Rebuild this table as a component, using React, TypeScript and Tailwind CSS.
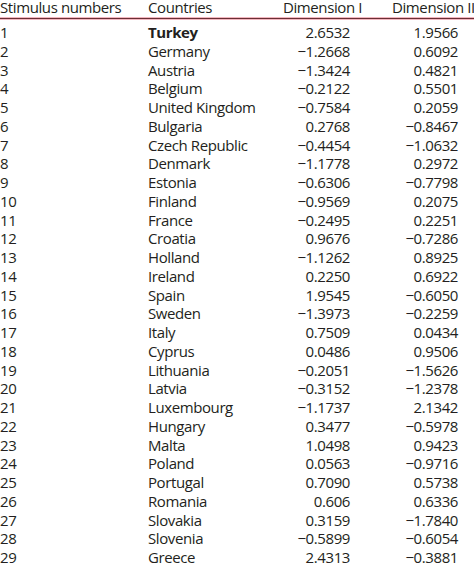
const rows: [string, string, string][] = [
  ["Turkey", "2.6532", "1.9566"],
  ["Germany", "\u22121.2668", "0.6092"],
  ["Austria", "\u22121.3424", "0.4821"],
  ["Belgium", "\u22120.2122", "0.5501"],
  ["United Kingdom", "\u22120.7584", "0.2059"],
  ["Bulgaria", "0.2768", "\u22120.8467"],
  ["Czech Republic", "\u22120.4454", "\u22121.0632"],
  ["Denmark", "\u22121.1778", "0.2972"],
  ["Estonia", "\u22120.6306", "\u22120.7798"],
  ["Finland", "\u22120.9569", "0.2075"],
  ["France", "\u22120.2495", "0.2251"],
  ["Croatia", "0.9676", "\u22120.7286"],
  ["Holland", "\u22121.1262", "0.8925"],
  ["Ireland", "0.2250", "0.6922"],
  ["Spain", "1.9545", "\u22120.6050"],
  ["Sweden", "\u22121.3973", "\u22120.2259"],
  ["Italy", "0.7509", "0.0434"],
  ["Cyprus", "0.0486", "0.9506"],
  ["Lithuania", "\u22120.2051", "\u22121.5626"],
  ["Latvia", "\u22120.3152", "\u22121.2378"],
  ["Luxembourg", "\u22121.1737", "2.1342"],
  ["Hungary", "0.3477", "\u22120.5978"],
  ["Malta", "1.0498", "0.9423"],
  ["Poland", "0.0563", "\u22120.9716"],
  ["Portugal", "0.7090", "0.5738"],
  ["Romania", "0.606", "0.6336"],
  ["Slovakia", "0.3159", "\u22121.7840"],
  ["Slovenia", "\u22120.5899", "\u22120.6054"],
  ["Greece", "2.4313", "\u22120.3881"],
];

export default function App() {
  return (
    <div className="w-[474px] h-[567px] overflow-hidden bg-white text-[#231f20] text-[15px] tracking-[-0.4px] font-['Open_Sans',sans-serif] whitespace-nowrap">
      <div className="grid grid-cols-[148px_132px_100px_94px] h-[16px] leading-[16px] -mt-[1px]">
        <div>Stimulus numbers</div>
        <div>Countries</div>
        <div className="text-right pr-[18px]">Dimension I</div>
        <div className="pl-3 overflow-hidden">Dimension II</div>
      </div>
      <div className="h-[3px] mt-[2px] bg-[#6a2f35] border-y border-[#f3b6bf]" />
      <div className="pt-[3px]">
        {rows.map(([country, d1, d2], i) => (
          <div key={i} className="grid grid-cols-[148px_132px_100px_94px] h-[18.75px] leading-[18.75px]">
            <div>{i + 1}</div>
            <div className={i === 0 ? "font-bold" : ""}>{country}</div>
            <div className="text-right pr-[30px]">{d1}</div>
            <div className="text-right pr-[16px]">{d2}</div>
          </div>
        ))}
      </div>
    </div>
  );
}
